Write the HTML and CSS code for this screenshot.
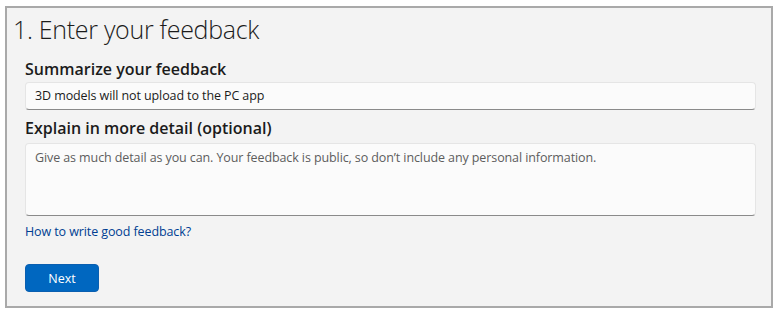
FILE: index.html
```html
<!DOCTYPE html>
<html lang="en">
<head>
<meta charset="utf-8">
<title>Enter your feedback</title>
<link rel="stylesheet" href="styles.css">
</head>
<body>
<div class="frame">
  <h1 class="title">1. Enter your feedback</h1>
  <div class="section">
    <h2 class="label">Summarize your feedback</h2>
    <div class="input">3D models will not upload to the PC app</div>
    <h2 class="label label-detail">Explain in more detail (optional)</h2>
    <div class="textarea">Give as much detail as you can. Your feedback is public, so don’t include any personal information.</div>
    <a class="link" href="#">How to write good feedback?</a>
    <button class="btn" type="button">Next</button>
  </div>
</div>
</body>
</html>
```

FILE: styles.css
```css
html, body {
  margin: 0;
  padding: 0;
  background: #ffffff;
}
body {
  font-family: "Open Sans", "Noto Sans", "Liberation Sans", sans-serif;
  color: #1b1b1b;
}
.frame {
  box-sizing: border-box;
  margin: 6px 0 0 5px;
  width: 768px;
  height: 302px;
  background: #f3f3f3;
  border: 2px solid #a9a9a9;
  padding: 0 0 0 6px;
}
.title {
  margin: 0;
  padding-top: 5px;
  font-size: 25px;
  font-weight: 300;
  line-height: 32px;
  letter-spacing: -0.3px;
  color: #1b1b1b;
}
.section {
  display: flex;
  flex-direction: column;
  align-items: flex-start;
  padding-left: 12px;
  width: 731px;
}
.label {
  margin: 13px 0 0;
  font-size: 16px;
  font-weight: 600;
  line-height: 22px;
  letter-spacing: 0;
}
.label-detail {
  margin-top: 7px;
}
.input {
  box-sizing: border-box;
  margin-top: 2px;
  width: 100%;
  height: 28px;
  background: #fbfbfb;
  border: 1px solid #e5e5e5;
  border-bottom: 1px solid #8a8a8a;
  border-radius: 4px;
  padding: 0 9px;
  font-size: 12.5px;
  line-height: 26px;
  letter-spacing: -0.1px;
  color: #1b1b1b;
}
.textarea {
  box-sizing: border-box;
  margin-top: 4px;
  width: 100%;
  height: 73px;
  background: #fbfbfb;
  border: 1px solid #e5e5e5;
  border-bottom: 1px solid #8a8a8a;
  border-radius: 4px;
  padding: 4px 9px;
  font-size: 12.5px;
  line-height: 20px;
  letter-spacing: -0.1px;
  color: #5d5d5d;
}
.link {
  margin-top: 7px;
  font-size: 12.5px;
  line-height: 18px;
  color: #003e92;
  text-decoration: none;
  letter-spacing: -0.1px;
}
.btn {
  margin-top: 23px;
  width: 74px;
  height: 28px;
  border: 1px solid #0a5fb0;
  border-radius: 4px;
  background: #0067c0;
  color: #ffffff;
  font-family: inherit;
  font-size: 12.5px;
  padding: 0;
}
```
